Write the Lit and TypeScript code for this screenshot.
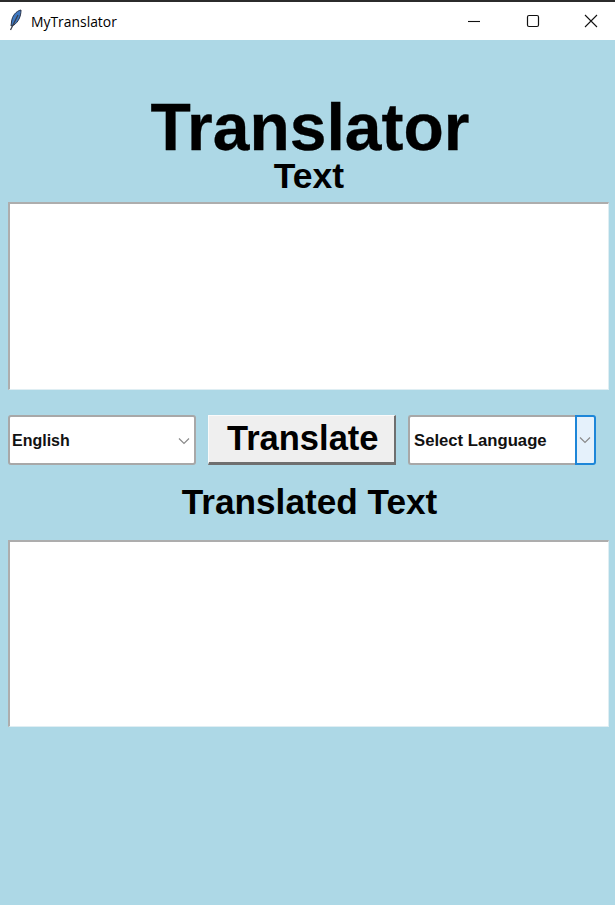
import { LitElement, html, css } from "lit";
import { customElement } from "lit/decorators.js";

const chevron = html`<svg class="chev" width="12" height="8" viewBox="0 0 12 8" fill="none"><path d="M1 1.5 L6 6.5 L11 1.5" stroke="#8a8a8a" stroke-width="1.2"/></svg>`;

@customElement("app-root")
export class AppRoot extends LitElement {
  static styles = css`
    :host { display: block; width: 615px; height: 905px; overflow: hidden; font-family: "Liberation Sans", Arial, sans-serif; color: #000; background: #add8e6; }
    .titlebar { height: 40px; box-sizing: border-box; background: #fff; border-top: 2px solid #2b2b2b; display: flex; align-items: center; padding-right: 17px; gap: 44.5px; }
    .lead { flex: 1; display: flex; align-items: center; }
    .feather { margin-left: 8px; width: 16px; height: 24px; flex: none; }
    .appname { margin-left: 7px; font-family: "Open Sans", "Noto Sans", sans-serif; font-size: 13.9px; }
    .winbtn { width: 14px; height: 14px; flex: none; display: block; }
    .main { display: flex; flex-direction: column; align-items: stretch; padding: 0 6px 0 8px; }
    h1 { margin: 55px 0 0; padding-left: 3px; font-size: 66px; line-height: 64px; font-weight: 700; text-align: center; -webkit-text-stroke: 0.3px #000; }
    .h2 { font-weight: 700; text-align: center; }
    .text-label { margin-top: 1px; padding-left: 1px; font-size: 35.5px; line-height: 32px; }
    .box { box-sizing: border-box; background: #fff; border-style: solid; border-width: 2px 1px 1px 2px; border-color: #adadad #dfeef3 #dfeef3 #adadad; }
    .box.first { margin-top: 10px; height: 188px; }
    .box.second { height: 187px; }
    .row { display: flex; align-items: stretch; height: 50px; margin-top: 25px; }
    .select { box-sizing: border-box; background: #fff; border: 2px solid #a8a8a8; border-radius: 3px; display: flex; align-items: center; font-weight: 700; color: #111; }
    .src { width: 187.5px; padding: 1px 4px 0 2px; justify-content: space-between; font-size: 16px; }
    .btn { margin-left: 12.5px; width: 187.5px; box-sizing: border-box; background: #efefef; border-style: solid; border-width: 1px 2px 3px 1px; border-color: #fafafa #6f6f6f #6f6f6f #fafafa; font-weight: 700; font-size: 34.5px; display: flex; align-items: center; justify-content: center; padding-left: 3px; padding-bottom: 1px; }
    .dst { margin-left: 12.5px; width: 167px; padding: 1px 0 0 4px; border-right: none; border-radius: 3px 0 0 3px; flex: none; font-size: 16.7px; }
    .arrow { width: 20.5px; box-sizing: border-box; background: #e5f1fb; border: 2px solid #1d86d8; border-radius: 0 3px 3px 0; display: flex; align-items: center; justify-content: center; flex: none; }
    .tt { margin-top: 17px; margin-bottom: 18px; font-size: 35.2px; line-height: 40px; padding-left: 2px; }
  `;

  render() {
    return html`
      <div class="titlebar">
        <div class="lead">
          <svg class="feather" viewBox="0 0 16 24">
            <path d="M13 1 C8 2 4 7 3.5 13 L3 17 L6 16 C10 13 13 8 13 1 Z" fill="#3f78c0" stroke="#26324a" stroke-width="1"/>
            <path d="M10 6 L2.5 21" stroke="#3a3f4a" stroke-width="1.3" fill="none"/>
          </svg>
          <div class="appname">MyTranslator</div>
        </div>
        <svg class="winbtn" viewBox="0 0 14 14"><path d="M1 7.5 H13" stroke="#111" stroke-width="1.1"/></svg>
        <svg class="winbtn" viewBox="0 0 14 14" fill="none"><rect x="1.5" y="1.5" width="11" height="11" rx="1.5" stroke="#111" stroke-width="1.2"/></svg>
        <svg class="winbtn" viewBox="0 0 14 14"><path d="M1 1 L13 13 M13 1 L1 13" stroke="#111" stroke-width="1.1"/></svg>
      </div>
      <div class="main">
        <h1>Translator</h1>
        <div class="h2 text-label">Text</div>
        <div class="box first"></div>
        <div class="row">
          <div class="select src"><span>English</span>${chevron}</div>
          <div class="btn">Translate</div>
          <div class="select dst"><span>Select Language</span></div>
          <div class="arrow">${chevron}</div>
        </div>
        <div class="h2 tt">Translated Text</div>
        <div class="box second"></div>
      </div>
    `;
  }
}
